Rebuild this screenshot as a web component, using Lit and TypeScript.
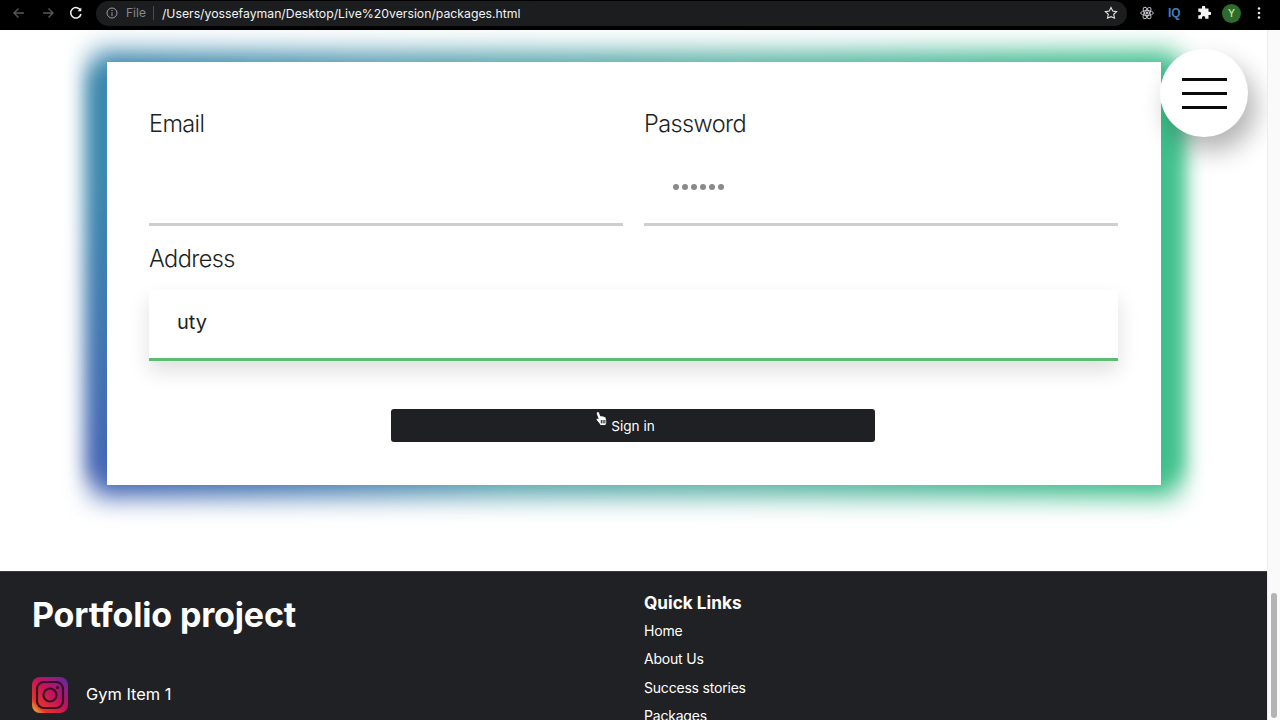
import { LitElement, html, css } from "lit";
import { customElement } from "lit/decorators.js";

@customElement("app-root")
export class AppRoot extends LitElement {
  static styles = css`
    :host { display: block; width: 1280px; height: 720px; overflow: hidden; position: relative; background: #fff; font-family: Inter, "Liberation Sans", sans-serif; color: #212529; }
    .chrome { height: 30px; background: #000; display: flex; align-items: center; color: #fff; box-sizing: border-box; padding-bottom: 4px; }
    .nav { display: flex; align-items: center; gap: 14.5px; padding-left: 12px; width: 96px; box-sizing: border-box; flex: none; }
    .nav svg, .tools svg { display: block; }
    .pill { width: 1031px; flex: none; height: 25px; background: #1c1d1f; border-radius: 13px; display: flex; align-items: center; box-sizing: border-box; padding: 0 9px 0 10px; font-size: 12.25px; }
    .file { color: #85888c; margin-left: 8px; padding-right: 7px; border-right: 1px solid #4a4b4e; line-height: 14px; font-size: 12px; }
    .url { margin-left: 8px; color: #f1f3f4; flex: 1; }
    .tools { display: flex; align-items: center; padding-left: 13px; flex: 1; }
    .iq { font: 700 12px "Liberation Sans", sans-serif; color: #3f7fc0; margin-left: 14px; width: 14px; }
    .avatar { width: 19px; height: 19px; border-radius: 50%; background: #2f6b2c; color: #cfe8a0; font: 500 10px Inter, sans-serif; display: flex; align-items: center; justify-content: center; margin-left: 11px; }

    .page { width: 1267px; height: 690px; display: flex; flex-direction: column; overflow: hidden; }
    .main { height: 541px; flex: none; padding: 32px 106px 0 107px; box-sizing: border-box; }
    .card { position: relative; width: 1054px; height: 423px; }
    .glow, .glow-sides { position: absolute;
      background:
        radial-gradient(ellipse 420px 300px at 0% 100%, #4464b4 0%, rgba(68,100,180,0) 100%),
        linear-gradient(90deg, #3a86ad 0%, #5a9eb5 25%, #5fb5a8 60%, #3cc08a 100%); }
    .glow { inset: -11px -17px -12px -15px; filter: blur(13px); }
    .glow-sides { inset: 8px -21px 8px -18px; filter: blur(10px); }
    .panel { position: absolute; inset: 0; background: #fff; padding: 43px 43px 0 42px; box-sizing: border-box; }
    .grid { display: grid; grid-template-columns: 474px 474px; column-gap: 21px; }
    label { display: block; font-size: 23.5px; font-weight: 300; line-height: 38px; color: #1d1f21; letter-spacing: -0.6px; height: 38px; }
    .input { height: 81px; margin-top: 2px; border-bottom: 3px solid #cfcfcf; box-sizing: border-box; display: flex; align-items: center; padding: 6px 0 0 29px; }
    .dots { display: flex; gap: 3px; }
    .dots i { width: 6px; height: 6px; background: #8a8a8a; border-radius: 50%; }
    .addr { margin-top: 14px; }
    .focus { height: 71px; margin-top: 12px; width: 969px; border-bottom: 3px solid #5dbb72; box-sizing: border-box; box-shadow: 0 10px 20px rgba(0,0,0,0.13); display: flex; align-items: center; padding: 0 0 4px 28px; font-size: 20px; color: #1d1f21; background: #fff; }
    .btn { width: 484px; height: 33px; margin: 48px 0 0 242px; background: #1f2023; color: #fff; border-radius: 3px; display: flex; align-items: center; justify-content: center; font-size: 13.6px; box-sizing: border-box; }

    .footer { flex: 1; background: #202124; color: #fff; display: grid; grid-template-columns: 612px 1fr; padding-left: 32px; border-top: 1px solid #3a3a3a; box-sizing: border-box; }
    h1 { margin: 21px 0 0; font-size: 34px; font-weight: 700; line-height: 44px; letter-spacing: -0.15px; }
    .social { display: flex; align-items: center; gap: 18px; margin-top: 40px; font-size: 16.4px; font-weight: 400; }
    .social span { margin-top: -3px; }
    h2 { margin: 20px 0 0; font-size: 17.2px; font-weight: 700; line-height: 21px; }
    ul { list-style: none; margin: 3px 0 0; padding: 0; font-size: 14px; letter-spacing: -0.2px; }
    li { height: 28.4px; line-height: 29px; }

    .menu { position: absolute; left: 1160px; top: 49px; width: 88px; height: 88px; border-radius: 50%; background: #fff; box-shadow: 8px 14px 26px rgba(0,0,0,0.3); display: flex; flex-direction: column; align-items: center; justify-content: center; gap: 11px; }
    .menu i { width: 45px; height: 3px; background: #0a0a0a; }
    .scroll { position: absolute; left: 1267px; top: 30px; width: 13px; height: 690px; background: #fafafa; border-left: 1px solid #ececec; box-sizing: border-box; }
    .thumb { position: absolute; left: 3px; top: 563px; width: 6px; height: 125px; border-radius: 3px; background: #b4b4b4; }
    .cursor { position: absolute; left: 595px; top: 411px; }
  `;

  render() {
    return html`
      <div class="chrome">
        <div class="nav">
          <svg width="14" height="14" viewBox="0 0 14 14" fill="none" stroke="#55575a" stroke-width="1.4"><path d="M12 7H2M6.5 2.5 2 7l4.5 4.5"/></svg>
          <svg width="14" height="14" viewBox="0 0 14 14" fill="none" stroke="#55575a" stroke-width="1.4"><path d="M2 7h10M7.5 2.5 12 7l-4.5 4.5"/></svg>
          <svg width="14" height="14" viewBox="0 0 14 14" fill="none" stroke="#f1f3f4" stroke-width="1.5"><path d="M11.6 4.5A5.2 5.2 0 1 0 12 8"/><path d="M12.3 1.6v3.7H8.6z" fill="#f1f3f4" stroke="none"/></svg>
        </div>
        <div class="pill">
          <svg width="12" height="12" viewBox="0 0 12 12" fill="none" stroke="#9a9da1" stroke-width="1"><circle cx="6" cy="6" r="5"/><path d="M6 5.4V9M6 3v1.2"/></svg>
          <span class="file">File</span>
          <span class="url">/Users/yossefayman/Desktop/Live%20version/packages.html</span>
          <svg width="14" height="14" viewBox="0 0 14 14" fill="none" stroke="#e3e3e3" stroke-width="1.1"><path d="m7 1.5 1.7 3.6 3.9.5-2.9 2.7.8 3.9L7 10.7l-3.5 1.5.8-3.9-2.9-2.7 3.9-.5z"/></svg>
        </div>
        <div class="tools">
          <svg width="14" height="14" viewBox="0 0 14 14" fill="none" stroke="#c9ccd0" stroke-width=".9"><ellipse cx="7" cy="7" rx="6.3" ry="2.5"/><ellipse cx="7" cy="7" rx="6.3" ry="2.5" transform="rotate(60 7 7)"/><ellipse cx="7" cy="7" rx="6.3" ry="2.5" transform="rotate(120 7 7)"/><circle cx="7" cy="7" r="1.1" fill="#c9ccd0"/></svg>
          <span class="iq">IQ</span>
          <svg style="margin-left:15px" width="14" height="14" viewBox="0 0 14 14" fill="#f4f4f4"><path d="M5 1.2a1.6 1.6 0 0 1 3.2 0V2.5h3.3v3.3h1.2a1.6 1.6 0 0 1 0 3.2h-1.2v3.8H8.2v-1.2a1.6 1.6 0 0 0-3.2 0v1.2H1.3V9.2h1.1a1.7 1.7 0 0 0 0-3.4H1.3V2.5H5z"/></svg>
          <div class="avatar">Y</div>
          <svg style="margin-left:16px" width="4" height="14" viewBox="0 0 4 14" fill="#e8e8e8"><circle cx="2" cy="2.5" r="1.3"/><circle cx="2" cy="7" r="1.3"/><circle cx="2" cy="11.5" r="1.3"/></svg>
        </div>
      </div>
      <div class="page">
        <div class="main">
          <div class="card">
            <div class="glow"></div>
            <div class="glow-sides"></div>
            <div class="panel">
              <div class="grid">
                <div><label>Email</label><div class="input"></div></div>
                <div><label>Password</label><div class="input"><span class="dots"><i></i><i></i><i></i><i></i><i></i><i></i></span></div></div>
              </div>
              <div class="addr">
                <label>Address</label>
                <div class="focus">uty</div>
              </div>
              <div class="btn">Sign in</div>
            </div>
          </div>
        </div>
        <div class="footer">
          <div>
            <h1>Portfolio project</h1>
            <div class="social">
              <svg width="36" height="36" viewBox="0 0 36 36">
                <defs>
                  <linearGradient id="ig" x1="0" y1="1" x2="1" y2="0"><stop offset="0" stop-color="#f2d43f"/><stop offset=".2" stop-color="#e4352c"/><stop offset=".55" stop-color="#c2125f"/><stop offset="1" stop-color="#5a2aa8"/></linearGradient>
                </defs>
                <rect width="36" height="36" rx="8" fill="url(#ig)"/>
                <rect x="5" y="5" width="26" height="26" rx="7" fill="none" stroke="#3a1020" stroke-width="2.2"/>
                <circle cx="18" cy="18" r="6.5" fill="none" stroke="#3a1020" stroke-width="2.2"/>
                <circle cx="25.5" cy="10.5" r="1.6" fill="#3a1020"/>
              </svg>
              <span>Gym Item 1</span>
            </div>
          </div>
          <div>
            <h2>Quick Links</h2>
            <ul><li>Home</li><li>About Us</li><li>Success stories</li><li>Packages</li></ul>
          </div>
        </div>
      </div>
      <div class="menu"><i></i><i></i><i></i></div>
      <div class="scroll"><div class="thumb"></div></div>
      <svg class="cursor" width="14" height="16" viewBox="0 0 14 16"><path d="M2 1c1-.7 2-.2 2.4.8L5.6 5l1-.2c.6-.1 1 .1 1.3.5.6-.3 1.2-.1 1.5.4.7-.2 1.3.2 1.5.8l.8 3.6c.2 1.7-.4 3.2-1.5 4.4H5.6L1.8 9.6C1.2 8.8 1 8 1.6 7.5c.5-.4 1.1-.2 1.6.2L1.4 3C1.2 2.2 1.4 1.4 2 1z" fill="#fff" stroke="#000" stroke-width=".7"/><path d="M6.3 9v3.4M8.1 9v3.4M9.9 9v3.4" stroke="#000" stroke-width=".9"/></svg>
    `;
  }
}
